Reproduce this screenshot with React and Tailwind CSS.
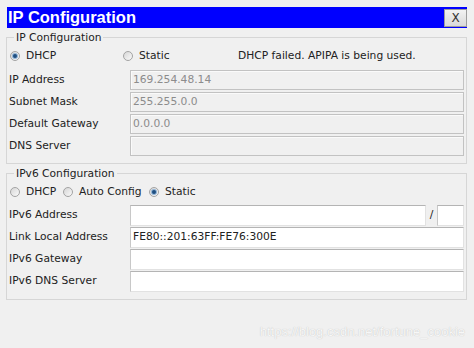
import React from 'react';

const Radio = ({ checked }) => (
  <span className="relative inline-block w-[10px] h-[10px] rounded-full border border-[#a3a3a3] bg-gradient-to-br from-[#d6d6d6] to-[#fafafa] shrink-0">
    {checked && (
      <span className="absolute left-[2px] top-[2px] w-[4px] h-[4px] rounded-full bg-[#1f4f80] shadow-[0_0_0_1px_#8fb3d6]" />
    )}
  </span>
);

const RadioItem = ({ label, checked, className = '' }) => (
  <div className={`flex items-center gap-[6px] ${className}`}>
    <Radio checked={checked} />
    <span>{label}</span>
  </div>
);

const Row = ({ label, children, h = 'h-[20px]' }) => (
  <div className={`flex items-stretch ${h}`}>
    <div className="w-[121px] flex items-center">{label}</div>
    <div className="flex-1 flex">{children}</div>
  </div>
);

const DisabledField = ({ value }) => (
  <div className="flex-1 flex items-center pl-[2px] border border-[#c2c2c2] shadow-[inset_1px_1px_0_#fafafa] bg-[#f0f0f0] text-[#8c8c8c]">
    {value}
  </div>
);

const WhiteField = ({ value, className = 'flex-1' }) => (
  <div className={`${className} flex items-center pl-[2px] bg-white border border-[#e2e2e2] border-t-[#b4b4b4] border-l-[#c8c8c8] text-[#222]`}>
    {value}
  </div>
);

export default function App() {
  const font = { fontFamily: '"DejaVu Sans", Verdana, sans-serif' };
  return (
    <div className="w-[474px] h-[348px] bg-[#f0f0f0] pt-[7px] px-[6px] text-[10.7px] text-[#222] overflow-hidden" style={font}>
      <div className="ml-[1px] mr-[1px] h-[21px] bg-[#0000ff] flex items-center justify-between">
        <span className="text-white font-bold text-[16.5px] leading-[21px] pl-[1px]" style={{ fontFamily: '"Liberation Sans", Arial, sans-serif' }}>
          IP Configuration
        </span>
        <div className="w-[23px] h-[18px] bg-gradient-to-b from-[#f2f2f2] to-[#d9d9d9] border border-[#9c9c9c] flex items-center justify-center text-[12px] text-[#333]">
          X
        </div>
      </div>

      <fieldset className="mt-[3px] w-[461px] border border-[#d6d6d6] px-[2px] pb-[7px]">
        <legend className="ml-[5px] px-[2px] leading-[13px]">IP Configuration</legend>
        <div className="flex flex-col gap-[2px]">
          <div className="h-[24px] pt-[1px] flex items-center pl-[1px]">
            <RadioItem label="DHCP" checked className="w-[113px]" />
            <RadioItem label="Static" className="w-[115px]" />
            <span>DHCP failed. APIPA is being used.</span>
          </div>
          <Row label="IP Address"><DisabledField value="169.254.48.14" /></Row>
          <Row label="Subnet Mask"><DisabledField value="255.255.0.0" /></Row>
          <Row label="Default Gateway"><DisabledField value="0.0.0.0" /></Row>
          <Row label="DNS Server"><DisabledField value="" /></Row>
        </div>
      </fieldset>

      <fieldset className="mt-[3px] w-[461px] border border-[#d6d6d6] px-[2px] pb-[7px]">
        <legend className="ml-[5px] px-[2px] leading-[13px]">IPv6 Configuration</legend>
        <div className="flex flex-col gap-[1px]">
          <div className="h-[24px] pt-[1px] flex items-center pl-[1px]">
            <RadioItem label="DHCP" className="w-[53px]" />
            <RadioItem label="Auto Config" className="w-[86px]" />
            <RadioItem label="Static" checked />
          </div>
          <Row label="IPv6 Address" h="h-[21px]">
            <WhiteField value="" />
            <span className="w-[11px] flex items-center justify-center">/</span>
            <WhiteField value="" className="w-[27px]" />
          </Row>
          <Row label="Link Local Address" h="h-[21px]"><WhiteField value="FE80::201:63FF:FE76:300E" /></Row>
          <Row label="IPv6 Gateway" h="h-[21px]"><WhiteField value="" /></Row>
          <Row label="IPv6 DNS Server" h="h-[21px]"><WhiteField value="" /></Row>
        </div>
      </fieldset>

      <div className="flex justify-end pr-[3px] mt-[22px]">
        <span className="text-[13px] text-[#f7f7f7] [text-shadow:0_0_1px_#b8b8b8]" style={{ fontFamily: '"Liberation Sans", Arial, sans-serif' }}>
          https://blog.csdn.net/fortune_cookie
        </span>
      </div>
    </div>
  );
}
